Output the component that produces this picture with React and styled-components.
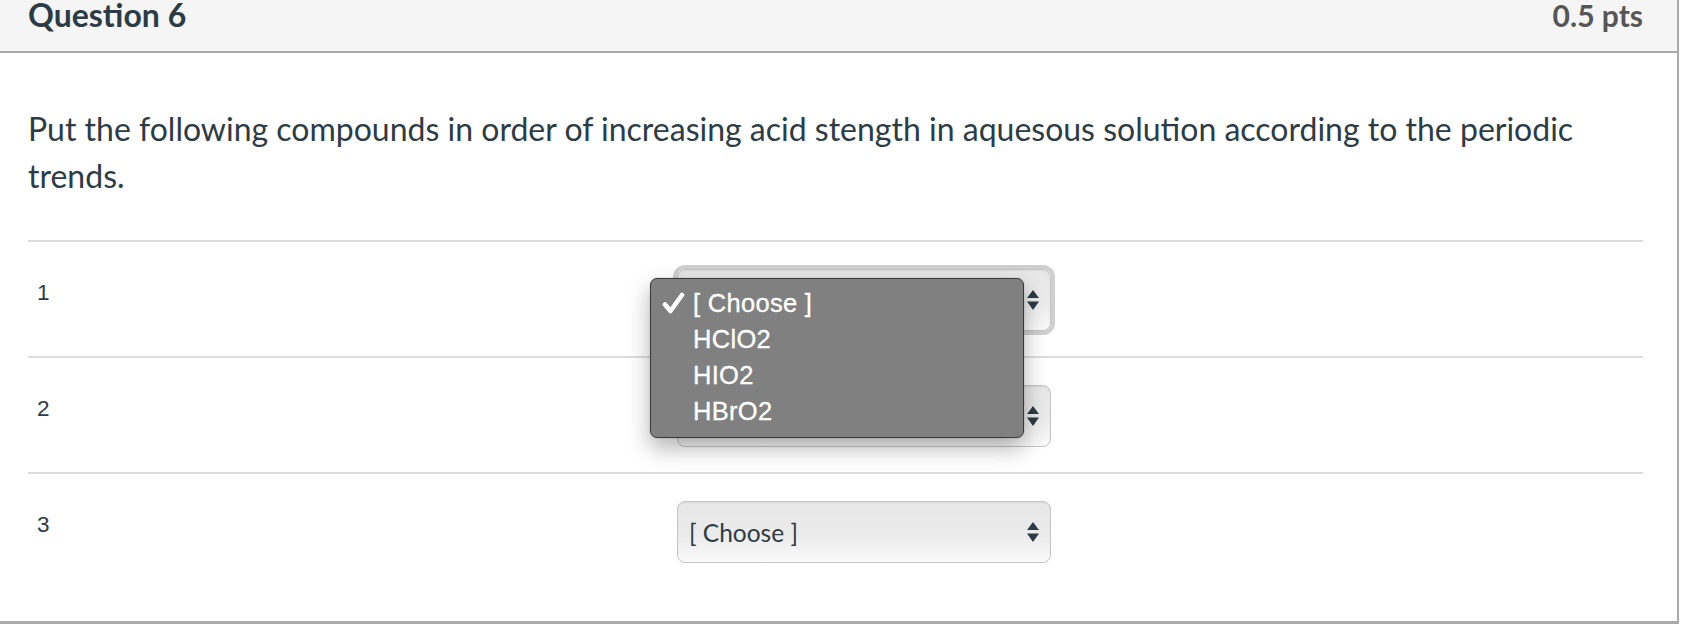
import styled, { createGlobalStyle } from "styled-components";

const GlobalStyle = createGlobalStyle`
  * { box-sizing: border-box; }
  body {
    margin: 0;
    background: #fff;
    font-family: Lato, "Liberation Sans", sans-serif;
    color: #2d3b45;
  }
`;

const Card = styled.div`
  width: 1679px;
  border-right: 2px solid #aaa;
  border-bottom: 3px solid #aaa;
`;

const Header = styled.div`
  height: 53px;
  display: flex;
  justify-content: space-between;
  align-items: flex-start;
  padding: 0 34px 0 28px;
  background: #f5f5f5;
  border-bottom: 2px solid #aaa;
  font-weight: 700;
  font-size: 32px;
  line-height: 30px;
`;

const Points = styled.span`
  color: #565656;
  font-size: 30px;
`;

const Body = styled.div`
  padding: 52px 34px 33px 28px;
`;

const Text = styled.p`
  margin: 0 0 41px;
  font-size: 32px;
  line-height: 47px;
`;

const Row = styled.div`
  height: 116px;
  display: grid;
  grid-template-columns: 649px 374px;
  align-items: start;
  padding: 27px 0 25px;
  border-top: 2px solid #dcdcdc;
`;

const Label = styled.div`
  padding: 11px 0 0 9px;
  font-family: "Liberation Sans", Arial, sans-serif;
  font-size: 22.5px;
  line-height: 25px;
`;

const Select = styled.div`
  position: relative;
  height: 62px;
  display: flex;
  align-items: center;
  justify-content: space-between;
  padding: 0 11px 0 11px;
  border: 1px solid #c4c4c4;
  border-radius: 8px;
  background: linear-gradient(#e7e7e7 0%, #ebebeb 55%, #fafafa 100%);
  box-shadow: ${(p) =>
    p.$focused
      ? "0 0 0 4px #cfcfcf, inset 0 1px 2px rgba(0,0,0,0.06)"
      : "inset 0 1px 2px rgba(0,0,0,0.06)"};
  font-size: 24.5px;
`;

const Menu = styled.div`
  position: absolute;
  left: -28px;
  top: 8px;
  z-index: 10;
  width: 374px;
  padding: 6px 0 8px;
  background: #808080;
  border: 1px solid #3a3a3a;
  border-radius: 7px;
  box-shadow: 0 10px 22px rgba(0, 0, 0, 0.3), 0 0 2px rgba(0, 0, 0, 0.2);
`;

const Item = styled.div`
  height: 36px;
  display: flex;
  align-items: center;
  padding-left: 11px;
  font-family: "Liberation Sans", Arial, sans-serif;
  font-size: 25.5px;
  letter-spacing: 0.3px;
  color: #fff;
  -webkit-text-stroke: 0.3px #fff;
`;

const Check = styled.span`
  width: 31px;
  display: flex;
  align-items: center;
`;

const Arrows = () => (
  <svg width="12" height="20" viewBox="0 0 12 20">
    <path d="M0 8 L6 0 L12 8 Z" fill="#2d3b45" />
    <path d="M0 11.5 L12 11.5 L6 20 Z" fill="#2d3b45" />
  </svg>
);

const CheckMark = () => (
  <svg width="23" height="22" viewBox="0 0 23 22">
    <path
      d="M3 12.5 L8.5 19 L20 3"
      fill="none"
      stroke="#fff"
      strokeWidth="4.6"
      strokeLinecap="round"
      strokeLinejoin="round"
    />
  </svg>
);

const options = ["[ Choose ]", "HClO2", "HIO2", "HBrO2"];

export default function App() {
  return (
    <>
      <GlobalStyle />
      <Card>
        <Header>
          <span>Question 6</span>
          <Points>0.5 pts</Points>
        </Header>
        <Body>
          <Text>
            Put the following compounds in order of increasing acid stength in
            aquesous solution according to the periodic trends.
          </Text>
          {[1, 2, 3].map((n) => (
            <Row key={n}>
              <Label>{n}</Label>
              <Select $focused={n === 1}>
                <span>[ Choose ]</span>
                <Arrows />
                {n === 1 && (
                  <Menu>
                    {options.map((o, i) => (
                      <Item key={o}>
                        <Check>{i === 0 && <CheckMark />}</Check>
                        {o}
                      </Item>
                    ))}
                  </Menu>
                )}
              </Select>
            </Row>
          ))}
        </Body>
      </Card>
    </>
  );
}
